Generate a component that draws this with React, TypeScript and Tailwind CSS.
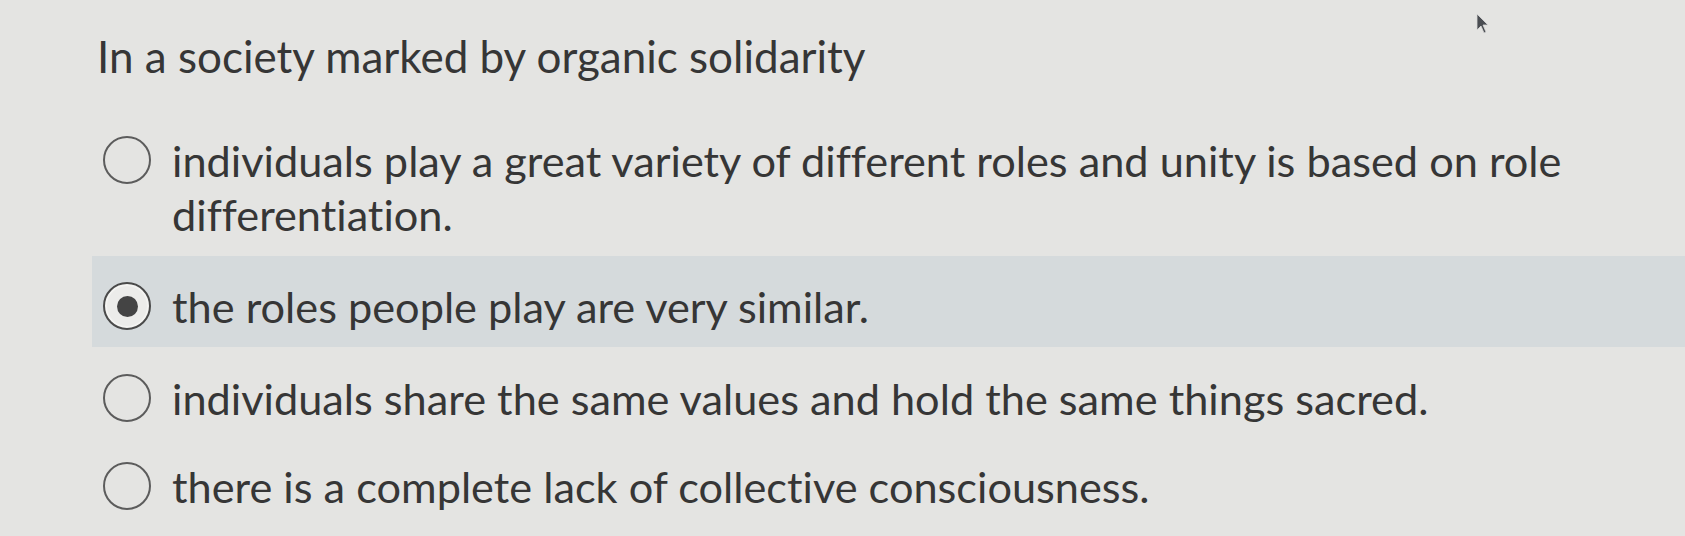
import React from 'react';

const options = [
  'individuals play a great variety of different roles and unity is based on role differentiation.',
  'the roles people play are very similar.',
  'individuals share the same values and hold the same things sacred.',
  'there is a complete lack of collective consciousness.',
];

function Radio({ checked }: { checked?: boolean }) {
  return (
    <div className="flex h-[54px] w-[48px] shrink-0 items-center justify-center">
      <div
        className={
          checked
            ? 'flex h-[48px] w-[48px] shrink-0 items-center justify-center rounded-full border-[2px] border-[#4a4a4a] bg-[#ececea] shadow-[inset_0_0_0_2px_#f4f4f2]'
            : 'h-[48px] w-[48px] shrink-0 rounded-full border-[2px] border-[#5c5c5c]'
        }
      >
        {checked && <div className="h-[21px] w-[21px] rounded-full bg-[#444444]" />}
      </div>
    </div>
  );
}

function Cursor() {
  return (
    <svg
      className="absolute left-[1475px] top-[13px]"
      width="16"
      height="22"
      viewBox="0 0 16 22"
    >
      <path d="M2 1 L2 17 L6 13 L9 20 L11 19 L8 12 L13 12 Z" fill="#4a4d52" stroke="#d8d8d8" strokeWidth="0.8" />
    </svg>
  );
}

export default function App() {
  return (
    <div className="relative h-[536px] w-full overflow-hidden bg-[#e4e4e2] font-['Lato','Open_Sans',sans-serif] text-[43.3px] leading-[54px] text-[#363636] [font-variant-ligatures:none]">
      <Cursor />
      <div className="pl-[97px] pt-[29px] text-[44px]">In a society marked by organic solidarity</div>

      <div className="mt-[50px]">
        <div className="flex gap-[21px] pl-[103px] pr-[50px]">
          <Radio />
          <div>{options[0]}</div>
        </div>

        <div className="ml-[92px] mt-[15px] flex gap-[21px] bg-[#d5dadc] pb-[14px] pl-[11px] pt-[23px]">
          <Radio checked />
          <div>{options[1]}</div>
        </div>

        <div className="mt-[24px] flex gap-[21px] pl-[103px]">
          <Radio />
          <div>{options[2]}</div>
        </div>

        <div className="mt-[34px] flex gap-[21px] pl-[103px]">
          <Radio />
          <div>{options[3]}</div>
        </div>
      </div>
    </div>
  );
}
